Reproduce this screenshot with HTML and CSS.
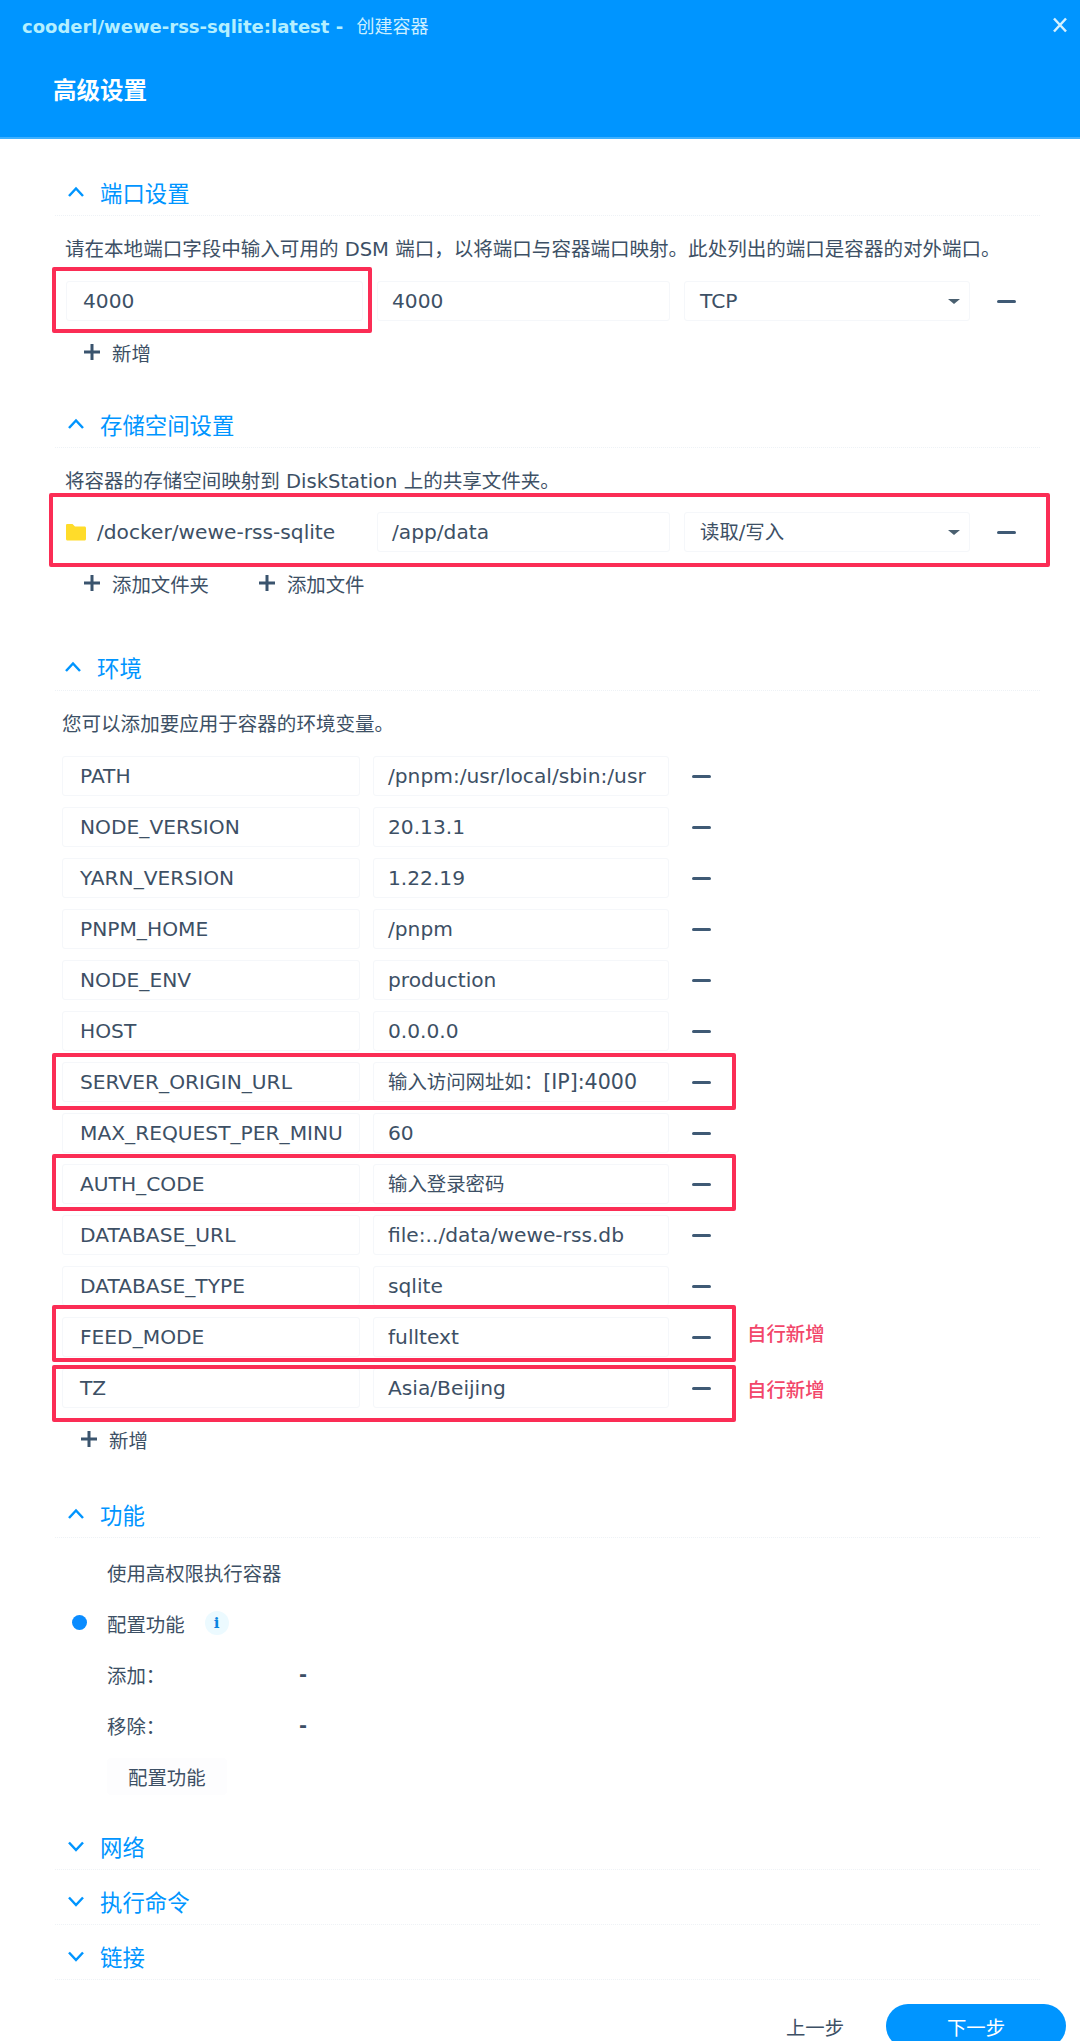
FILE: index.html
```html
<!DOCTYPE html>
<html lang="zh-CN">
<head>
  <meta charset="UTF-8">
  <title>创建容器 - 高级设置</title>
  <link rel="stylesheet" href="styles.css">
</head>
<body>

  <header class="head">
    <div class="head-top">
      <span class="head-title">cooderl/wewe-rss-sqlite:latest - <span class="head-sub">创建容器</span></span>
      <svg class="close" viewBox="0 0 16 16"><path d="M2 1.5 14 14.5M14 1.5 2 14.5"/></svg>
    </div>
    <h1>高级设置</h1>
  </header>

  <main class="content">

    <!-- 端口设置 -->
    <section class="sec sec-port">
      <h2 class="sec-head">
        <svg class="chev" viewBox="0 0 18 12"><path d="M2 10 9 2.5 16 10"/></svg>端口设置
      </h2>
      <p class="desc">请在本地端口字段中输入可用的 DSM 端口，以将端口与容器端口映射。此处列出的端口是容器的对外端口。</p>
      <div class="row row-map">
        <div class="field field-a">4000</div>
        <div class="field">4000</div>
        <div class="field select">TCP<i class="caret"></i></div>
        <i class="minus"></i>
        <div class="mark mark-port"></div>
      </div>
      <div class="adds">
        <span class="add"><svg class="plus" viewBox="0 0 18 18"><path d="M9 1v16M1 9h16"/></svg>新增</span>
      </div>
    </section>

    <!-- 存储空间设置 -->
    <section class="sec sec-store">
      <h2 class="sec-head">
        <svg class="chev" viewBox="0 0 18 12"><path d="M2 10 9 2.5 16 10"/></svg>存储空间设置
      </h2>
      <p class="desc">将容器的存储空间映射到 DiskStation 上的共享文件夹。</p>
      <div class="row row-map">
        <div class="path">
          <svg class="folder" viewBox="0 0 20 18"><path d="M0 2.5C0 1.4.6 1 1.5 1h5L9 3.5h9.5c.9 0 1.5.6 1.5 1.5v11c0 .9-.6 1.5-1.5 1.5h-17C.6 17.500 0 16.900 0 16z"/></svg>/docker/wewe-rss-sqlite
        </div>
        <div class="field">/app/data</div>
        <div class="field select zh">读取/写入<i class="caret"></i></div>
        <i class="minus"></i>
        <div class="mark mark-store"></div>
      </div>
      <div class="adds">
        <span class="add"><svg class="plus" viewBox="0 0 18 18"><path d="M9 1v16M1 9h16"/></svg>添加文件夹</span>
        <span class="add"><svg class="plus" viewBox="0 0 18 18"><path d="M9 1v16M1 9h16"/></svg>添加文件</span>
      </div>
    </section>

    <!-- 环境 -->
    <section class="sec sec-env">
      <h2 class="sec-head">
        <svg class="chev" viewBox="0 0 18 12"><path d="M2 10 9 2.5 16 10"/></svg>环境
      </h2>
      <p class="desc">您可以添加要应用于容器的环境变量。</p>
      <div class="env-list">
        <div class="row row-env"><div class="field">PATH</div><div class="field">/pnpm:/usr/local/sbin:/usr</div><i class="minus"></i></div>
        <div class="row row-env"><div class="field">NODE_VERSION</div><div class="field">20.13.1</div><i class="minus"></i></div>
        <div class="row row-env"><div class="field">YARN_VERSION</div><div class="field">1.22.19</div><i class="minus"></i></div>
        <div class="row row-env"><div class="field">PNPM_HOME</div><div class="field">/pnpm</div><i class="minus"></i></div>
        <div class="row row-env"><div class="field">NODE_ENV</div><div class="field">production</div><i class="minus"></i></div>
        <div class="row row-env"><div class="field">HOST</div><div class="field">0.0.0.0</div><i class="minus"></i></div>
        <div class="row row-env"><div class="field">SERVER_ORIGIN_URL</div><div class="field zh">输入访问网址如：<span class="lat">[IP]:4000</span></div><i class="minus"></i><div class="mark mark-server"></div></div>
        <div class="row row-env"><div class="field">MAX_REQUEST_PER_MINU</div><div class="field">60</div><i class="minus"></i></div>
        <div class="row row-env"><div class="field">AUTH_CODE</div><div class="field zh">输入登录密码</div><i class="minus"></i><div class="mark mark-auth"></div></div>
        <div class="row row-env"><div class="field">DATABASE_URL</div><div class="field">file:../data/wewe-rss.db</div><i class="minus"></i></div>
        <div class="row row-env"><div class="field">DATABASE_TYPE</div><div class="field">sqlite</div><i class="minus"></i></div>
        <div class="row row-env"><div class="field">FEED_MODE</div><div class="field">fulltext</div><i class="minus"></i><span class="note note-up">自行新增</span><div class="mark mark-feed"></div></div>
        <div class="row row-env"><div class="field">TZ</div><div class="field">Asia/Beijing</div><i class="minus"></i><span class="note">自行新增</span><div class="mark mark-tz"></div></div>
      </div>
      <div class="adds">
        <span class="add"><svg class="plus" viewBox="0 0 18 18"><path d="M9 1v16M1 9h16"/></svg>新增</span>
      </div>
    </section>

    <!-- 功能 -->
    <section class="sec sec-cap">
      <h2 class="sec-head">
        <svg class="chev" viewBox="0 0 18 12"><path d="M2 10 9 2.5 16 10"/></svg>功能
      </h2>
      <div class="cap-list">
        <div class="cap-item">使用高权限执行容器</div>
        <div class="cap-item">
          <i class="dot"></i>配置功能<span class="info">i</span>
        </div>
        <div class="cap-item"><span class="cap-key">添加：</span><b class="cap-val">-</b></div>
        <div class="cap-item"><span class="cap-key">移除：</span><b class="cap-val">-</b></div>
        <div class="cap-item"><span class="cap-btn">配置功能</span></div>
      </div>
    </section>

    <!-- 折叠的分组 -->
    <section class="sec sec-closed sec-net">
      <h2 class="sec-head">
        <svg class="chev" viewBox="0 0 18 12"><path d="M2 2.500 9 10 16 2.500"/></svg>网络
      </h2>
    </section>
    <section class="sec sec-closed">
      <h2 class="sec-head">
        <svg class="chev" viewBox="0 0 18 12"><path d="M2 2.500 9 10 16 2.500"/></svg>执行命令
      </h2>
    </section>
    <section class="sec sec-closed">
      <h2 class="sec-head">
        <svg class="chev" viewBox="0 0 18 12"><path d="M2 2.500 9 10 16 2.500"/></svg>链接
      </h2>
    </section>
  </main>

  <footer class="foot">
    <button type="button" class="btn">上一步</button>
    <button type="button" class="btn btn-next">下一步</button>
  </footer>

</body>
</html>
```

FILE: styles.css
```css
html, body {
  margin: 0;
  height: 100%;
  overflow: hidden;
}
body {
  width: 1080px;
  height: 2041px;
  font-family: "DejaVu Sans", "Noto Sans CJK SC", sans-serif;
  font-size: 19.400px;
  color: #3d5065;
  background-color: #fff;
}

/* header */
.head {
  box-sizing: border-box;
  height: 139px;
  padding: 11px 12px 0 22px;
  background-color: #0095ff;
  border-bottom: 2px solid #3db0ff;
}
.head-top {
  display: flex;
  justify-content: space-between;
  align-items: center;
  height: 28px;
}
.head-title {
  font-size: 18px;
  font-weight: 700;
  color: #b4efff;
}
.head-sub {
  margin-left: 7px;
  font-size: 18px;
  font-weight: 400;
  color: #cdefff;
}
.close {
  width: 16px;
  height: 16px;
  fill: none;
  stroke: #d4f1ff;
  stroke-width: 2.500;
}
.head h1 {
  margin: 34px 0 0 31px;
  font-size: 23.500px;
  font-weight: 700;
  line-height: 36px;
  color: #fff;
}

/* sections */
.content {
  padding: 32px 40px 0 55px;
}
.sec-store {
  margin-top: 35px;
}
.sec-env {
  margin-top: 47px;
}
.sec-cap {
  margin-top: 38px;
}
.sec-net {
  margin-top: 35px;
}
.sec-closed + .sec-closed {
  margin-top: 10px;
}
.sec-head {
  display: flex;
  align-items: center;
  box-sizing: border-box;
  height: 45px;
  margin: 0;
  padding: 0 0 2px 12px;
  font-size: 22.400px;
  font-weight: 400;
  color: #0095ff;
  border-bottom: 1px dotted #eef2f6;
}
.sec-env .sec-head {
  padding: 0 0 3px 9px;
}
.chev {
  width: 18px;
  height: 12px;
  margin-right: 15px;
  fill: none;
  stroke: #0095ff;
  stroke-width: 2.500;
}
.desc {
  height: 28px;
  margin: 20px 0 0 10px;
  font-size: 19.550px;
  line-height: 28px;
  white-space: nowrap;
}
.sec-env .desc {
  margin-left: 7px;
}

/* field rows */
.row {
  position: relative;
  display: grid;
  align-items: center;
  height: 40px;
  font-size: 20.200px;
  white-space: nowrap;
}
.row-map {
  grid-template-columns: 297px 293px 286px 19px;
  column-gap: 14px;
  margin: 17px 0 0 11px;
}
.row-map .minus {
  margin-left: 13px;
}
.sec-store .row-map {
  margin-top: 16px;
}
.env-list {
  display: flex;
  flex-direction: column;
  gap: 11px;
  margin: 17px 0 0 7px;
}
.row-env {
  grid-template-columns: 298px 296px 19px auto;
  column-gap: 13px;
}
.row-env .minus {
  margin-left: 10px;
}
.field {
  box-sizing: border-box;
  height: 40px;
  padding: 0 14px;
  line-height: 39px;
  overflow: hidden;
  border: 1px solid #f5f7fa;
  border-radius: 3px;
}
.field-a {
  padding-left: 16px;
}
.row-env .field:first-child {
  padding-left: 17px;
}
.zh {
  font-size: 19.400px;
}
.lat {
  font-size: 20.600px;
}
.select {
  position: relative;
  padding-left: 15px;
}
.caret {
  position: absolute;
  right: 9px;
  top: 17px;
  border: 6px solid transparent;
  border-top: 5px solid #4a6070;
  border-bottom: 0;
}
.minus {
  display: block;
  width: 19px;
  height: 3px;
  background-color: #3f5a75;
  border-radius: 2px;
}
.path {
  display: flex;
  align-items: center;
}
.folder {
  width: 20px;
  height: 18px;
  margin-right: 11px;
  fill: #ffdc2a;
}
.note {
  margin-left: 33px;
  font-size: 19.400px;
  font-weight: 500;
  color: #f2466a;
}
.note-up {
  margin-bottom: 10px;
}

/* red boxes over the screenshot */
.mark {
  position: absolute;
  box-sizing: border-box;
  border: 4px solid #fb2d55;
  border-radius: 2px;
}
.mark-port {
  left: -14px;
  top: -14px;
  width: 320px;
  height: 66px;
}
.mark-store {
  left: -17px;
  top: -19px;
  width: 1001px;
  height: 74px;
}
.mark-server,
.mark-auth,
.mark-feed,
.mark-tz {
  left: -10px;
  width: 684px;
  height: 57px;
}
.mark-server {
  top: -9px;
}
.mark-auth {
  top: -10px;
}
.mark-feed {
  top: -12px;
}
.mark-tz {
  top: -3px;
}

/* add buttons */
.adds {
  display: flex;
  gap: 49px;
  height: 32px;
  margin: 15px 0 0 28px;
}
.sec-env .adds {
  margin-left: 25px;
}
.add {
  display: flex;
  align-items: center;
}
.plus {
  width: 18px;
  height: 18px;
  margin-right: 11px;
  fill: none;
  stroke: #3a546e;
  stroke-width: 3;
}

/* capabilities */
.cap-list {
  display: flex;
  flex-direction: column;
  gap: 23px;
  margin: 20px 0 0 52px;
}
.cap-item {
  position: relative;
  display: flex;
  align-items: center;
  height: 28px;
}
.dot {
  position: absolute;
  left: -35px;
  top: 6px;
  width: 15px;
  height: 15px;
  background-color: #0a8cff;
  border-radius: 50%;
}
.info {
  width: 24px;
  height: 24px;
  margin-left: 20px;
  font-family: "DejaVu Serif", serif;
  font-size: 15px;
  font-weight: 700;
  line-height: 24px;
  text-align: center;
  color: #0a84e0;
  background-color: #ecfaff;
  border-radius: 50%;
}
.cap-key {
  width: 192px;
}
.cap-btn {
  padding: 4px 21px;
  background-color: #fdfdfe;
  border-radius: 4px;
}

/* footer */
.foot {
  display: flex;
  justify-content: flex-end;
  align-items: center;
  gap: 24px;
  margin-top: 24px;
  padding-right: 14px;
}
.btn {
  width: 94px;
  height: 44px;
  padding: 0;
  font-family: inherit;
  font-size: 19.400px;
  color: #3d5065;
  background: #fff;
  border: none;
}
.btn-next {
  width: 180px;
  color: #fff;
  background-color: #0095ff;
  border-radius: 22px;
}
```
